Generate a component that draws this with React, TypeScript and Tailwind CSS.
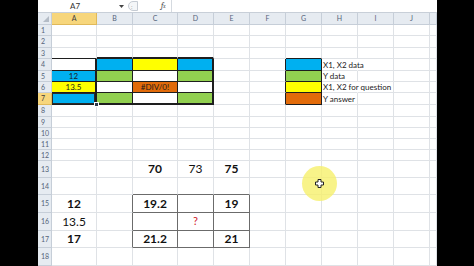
import React from 'react';

const COLS = ['A', 'B', 'C', 'D', 'E', 'F', 'G', 'H', 'I', 'J', 'K'];
const ROWS = Array.from({ length: 18 }, (_, i) => i + 1);

const GRID = 'border-r border-b border-[#dfe2e6] bg-white';

// cells that carry a fill or a border of their own
const cellStyles: Record<string, string> = {
  A3: 'border-r border-b border-r-[#dfe2e6] border-b-[#1e1e1e] bg-white',
  B3: 'border-r border-b-2 border-r-[#dfe2e6] border-b-[#1e1e1e] bg-white',
  C3: 'border-r border-b-2 border-r-[#dfe2e6] border-b-[#1e1e1e] bg-white',
  D3: 'border-r border-b-2 border-r-[#dfe2e6] border-b-[#1e1e1e] bg-white',

  A4: 'border-r-2 border-b border-[#1e1e1e] bg-white',
  B4: 'border-r border-b border-[#1e1e1e] bg-[#00b0f0]',
  C4: 'border-r border-b border-[#1e1e1e] bg-[#ffff00]',
  D4: 'border-r-2 border-b border-[#1e1e1e] bg-[#00b0f0]',

  A5: 'border-r-2 border-b border-[#1e1e1e] bg-[#00b0f0]',
  B5: 'border-r border-b border-[#1e1e1e] bg-[#92d050]',
  C5: 'border-r border-b border-[#1e1e1e] bg-white',
  D5: 'border-r-2 border-b border-[#1e1e1e] bg-[#92d050]',

  A6: 'border-r-2 border-b border-[#1e1e1e] bg-[#ffff00]',
  B6: 'border-r border-b border-[#1e1e1e] bg-white',
  C6: 'border-r border-b border-[#1e1e1e] bg-[#e26b0a]',
  D6: 'border-r-2 border-b border-[#1e1e1e] bg-white',

  A7: 'border-r-2 border-b border-[#1e1e1e] bg-[#00b0f0] shadow-[inset_0_0_0_1px_#2a2a2a]',
  B7: 'border-r border-b-2 border-[#1e1e1e] bg-[#92d050]',
  C7: 'border-r border-b-2 border-[#1e1e1e] bg-white',
  D7: 'border-r-2 border-b-2 border-[#1e1e1e] bg-[#92d050]',

  // legend
  G3: 'border-r border-b border-r-[#dfe2e6] border-b-[#1e1e1e] bg-white',
  F4: 'border-r border-b border-r-[#1e1e1e] border-b-[#dfe2e6] bg-white',
  F5: 'border-r border-b border-r-[#1e1e1e] border-b-[#dfe2e6] bg-white',
  F6: 'border-r border-b border-r-[#1e1e1e] border-b-[#dfe2e6] bg-white',
  F7: 'border-r border-b border-r-[#1e1e1e] border-b-[#dfe2e6] bg-white',
  G4: 'border-r border-b border-[#1e1e1e] bg-[#00b0f0]',
  G5: 'border-r border-b border-[#1e1e1e] bg-[#92d050]',
  G6: 'border-r border-b border-[#1e1e1e] bg-[#ffff00]',
  G7: 'border-r border-b border-[#1e1e1e] bg-[#e26b0a]',
  H4: 'border-r border-b border-r-transparent border-b-[#dfe2e6]',
  H6: 'border-r border-b border-r-transparent border-b-[#dfe2e6]',
  I6: 'border-r border-b border-[#dfe2e6]',

  // result box
  C14: 'border-r border-b border-r-[#dfe2e6] border-b-[#6b6b6b] bg-white',
  D14: 'border-r border-b border-r-[#dfe2e6] border-b-[#6b6b6b] bg-white',
  E14: 'border-r border-b border-r-[#dfe2e6] border-b-[#6b6b6b] bg-white',
  B15: 'border-r border-b border-r-[#6b6b6b] border-b-[#dfe2e6] bg-white',
  B16: 'border-r border-b border-r-[#6b6b6b] border-b-[#dfe2e6] bg-white',
  B17: 'border-r border-b border-r-[#6b6b6b] border-b-[#dfe2e6] bg-white',
  C15: 'border-r border-b border-[#6b6b6b] bg-white',
  D15: 'border-r border-b border-[#6b6b6b] bg-white',
  E15: 'border-r border-b border-[#6b6b6b] bg-white',
  C16: 'border-r border-b border-[#6b6b6b] bg-white',
  D16: 'border-r border-b border-[#6b6b6b] bg-white',
  E16: 'border-r border-b border-[#6b6b6b] bg-white',
  C17: 'border-r border-b border-[#6b6b6b] bg-white',
  D17: 'border-r border-b border-[#6b6b6b] bg-white',
  E17: 'border-r border-b border-[#6b6b6b] bg-white',
};

const SMALL = 'text-[8px] text-[#1b1b1b]';
const BIG = 'text-[12px] font-bold text-[#111]';
const BIG_REG = 'text-[12px] text-[#111]';
const LEGEND = 'text-[8px] text-[#1b1b1b] whitespace-nowrap absolute left-[1px] top-1/2 -translate-y-1/2 z-10';

const cellText: Record<string, { text: string; cls: string }> = {
  A5: { text: '12', cls: SMALL },
  A6: { text: '13.5', cls: SMALL },
  C6: { text: '#DIV/0!', cls: SMALL },
  H4: { text: 'X1, X2 data', cls: LEGEND },
  H5: { text: 'Y data', cls: LEGEND },
  H6: { text: 'X1, X2 for question', cls: LEGEND },
  H7: { text: 'Y answer', cls: LEGEND },
  C13: { text: '70', cls: BIG },
  D13: { text: '73', cls: BIG_REG },
  E13: { text: '75', cls: BIG },
  A15: { text: '12', cls: BIG },
  A16: { text: '13.5', cls: BIG_REG },
  A17: { text: '17', cls: BIG },
  C15: { text: '19.2', cls: BIG },
  E15: { text: '19', cls: BIG },
  D16: { text: '?', cls: 'text-[11px] text-[#d0202a]' },
  C17: { text: '21.2', cls: BIG },
  E17: { text: '21', cls: BIG },
};

function FormulaBar() {
  return (
    <div className="h-[13px] flex items-center bg-white border-b border-[#c8cfd8] text-[8px] text-[#333]">
      <div className="w-[74px] text-center">A7</div>
      <svg width="5" height="3" viewBox="0 0 5 3" className="ml-[7px]">
        <path d="M0 0h5L2.5 3z" fill="#444" />
      </svg>
      <div className="ml-[4px] w-[10px] h-[10px] rounded-l-full border border-[#c5cbd3] bg-[#f4f6f8] text-[6px] text-[#999] flex items-center pl-[2px]">
        :
      </div>
      <div className="ml-[23px] italic font-serif text-[8px] text-[#444]">
        f<span className="text-[5px]">x</span>
      </div>
      <div className="ml-[5px] h-full border-l border-[#d5dae0]" />
    </div>
  );
}

export default function App() {
  return (
    <div
      className="relative w-[474px] h-[266px] flex bg-black overflow-hidden"
      style={{ fontFamily: 'Lato, "Open Sans", sans-serif' }}
    >
      <div className="w-[38px] shrink-0 bg-black" />
      <div className="w-[399px] shrink-0 flex flex-col bg-white">
        <FormulaBar />
        <div className="grid grid-cols-[14px_45px_36px_45px_36px_36px_36px_36px_36px_36px_36px_7px] grid-rows-[12px_11px_12px_11px_12px_11px_11px_12px_12px_11px_11px_11px_11px_17px_17px_18px_18px_17px_18px]">
          {/* header row */}
          <div className="relative border-r border-b border-[#c6ced8] bg-[#e6ebf1]">
            <svg width="6" height="6" viewBox="0 0 6 6" className="absolute right-[2px] bottom-[2px]">
              <path d="M6 0v6H0z" fill="#b4bcc6" />
            </svg>
          </div>
          {COLS.map((c) => (
            <div
              key={c}
              className={
                c === 'A'
                  ? 'flex items-center justify-center border-r border-b border-[#e0b95a] bg-[#f7d67c] text-[7px] text-[#3c3c3c]'
                  : 'flex items-center justify-center border-r border-b border-[#c6ced8] bg-[#e6ebf1] text-[7px] text-[#55647a]'
              }
            >
              {c === 'K' ? '' : c}
            </div>
          ))}

          {ROWS.map((r) => (
            <React.Fragment key={r}>
              <div
                className={
                  r === 7
                    ? 'flex items-center pl-[3px] border-r border-b border-[#e0b95a] bg-[#f7d67c] text-[7px] text-[#3c3c3c]'
                    : 'flex items-center pl-[3px] border-r border-b border-[#c6ced8] bg-[#e6ebf1] text-[7px] text-[#55647a]'
                }
              >
                {r}
              </div>
              {COLS.map((c) => {
                const key = `${c}${r}`;
                const t = cellText[key];
                return (
                  <div
                    key={key}
                    className={`relative flex items-center justify-center ${cellStyles[key] ?? GRID}`}
                  >
                    {t && <span className={t.cls}>{t.text}</span>}
                    {key === 'A7' && (
                      <span className="absolute -bottom-[3px] -right-[4px] w-[5px] h-[5px] bg-[#2d3a4a] border border-white z-20" />
                    )}
                  </div>
                );
              })}
            </React.Fragment>
          ))}
        </div>
      </div>
      <div className="flex-1 bg-black" />

      {/* cursor highlight */}
      <div className="absolute left-[302px] top-[166px] w-[35px] h-[35px] rounded-full bg-[#f6f06c]/80 flex items-center justify-center">
        <svg width="9" height="9" viewBox="0 0 9 9">
          <path
            d="M3 0.5h3v2.5h2.5v3H6v2.5H3V6H0.5V3H3z"
            fill="#fff"
            stroke="#222"
            strokeWidth="1"
            strokeLinejoin="round"
          />
        </svg>
      </div>
    </div>
  );
}
